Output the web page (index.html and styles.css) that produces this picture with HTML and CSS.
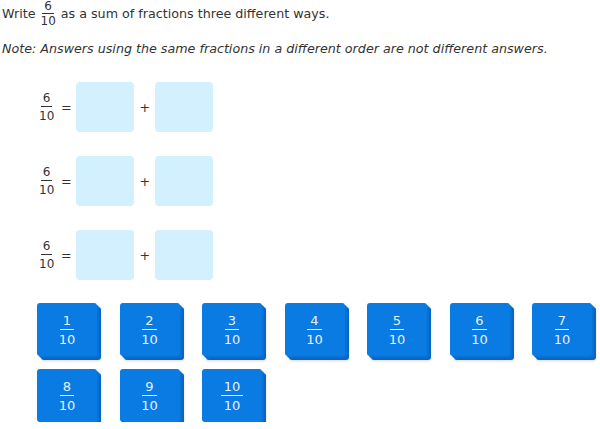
FILE: index.html
```html
<!DOCTYPE html>
<html lang="en">
<head>
    <meta charset="UTF-8">
    <title>Fractions as sums</title>
    <link rel="stylesheet" href="styles.css">
</head>
<body>
    <div class="question">
        <div class="prompt">
            Write
            <span class="frac"><span class="num">6</span><span class="den">10</span></span>
            as a sum of fractions three different ways.
        </div>
        <div class="note">Note: Answers using the same fractions in a different order are not different answers.</div>

        <div class="equations">
            <div class="equation">
                <span class="frac"><span class="num">6</span><span class="den">10</span></span>
                <span class="sign">=</span>
                <div class="slot"></div>
                <span class="sign plus">+</span>
                <div class="slot"></div>
            </div>
            <div class="equation">
                <span class="frac"><span class="num">6</span><span class="den">10</span></span>
                <span class="sign">=</span>
                <div class="slot"></div>
                <span class="sign plus">+</span>
                <div class="slot"></div>
            </div>
            <div class="equation">
                <span class="frac"><span class="num">6</span><span class="den">10</span></span>
                <span class="sign">=</span>
                <div class="slot"></div>
                <span class="sign plus">+</span>
                <div class="slot"></div>
            </div>
        </div>

        <div class="tiles">
            <div class="tile"><span class="frac"><span class="num">1</span><span class="den">10</span></span></div>
            <div class="tile"><span class="frac"><span class="num">2</span><span class="den">10</span></span></div>
            <div class="tile"><span class="frac"><span class="num">3</span><span class="den">10</span></span></div>
            <div class="tile"><span class="frac"><span class="num">4</span><span class="den">10</span></span></div>
            <div class="tile"><span class="frac"><span class="num">5</span><span class="den">10</span></span></div>
            <div class="tile"><span class="frac"><span class="num">6</span><span class="den">10</span></span></div>
            <div class="tile"><span class="frac"><span class="num">7</span><span class="den">10</span></span></div>
            <div class="tile"><span class="frac"><span class="num">8</span><span class="den">10</span></span></div>
            <div class="tile"><span class="frac"><span class="num">9</span><span class="den">10</span></span></div>
            <div class="tile"><span class="frac"><span class="num">10</span><span class="den">10</span></span></div>
        </div>
    </div>
</body>
</html>
```

FILE: styles.css
```css
* {
    box-sizing: border-box;
}

body {
    margin: 0;
    background-color: white;
    font-family: Verdana, 'DejaVu Sans', sans-serif;
    font-size: 12.7px;
    color: #333;
}

.question {
    padding: 0 0 0 2px;
}

/* stacked fraction */
.frac {
    display: inline-flex;
    flex-direction: column;
    align-items: center;
    vertical-align: middle;
    font-size: 12px;
    line-height: 12px;
}

.frac .num {
    padding: 0 2px 2px;
    border-bottom: 1px solid currentColor;
}

.frac .den {
    padding: 3px 2px 0;
}

.prompt {
    display: flex;
    align-items: center;
    gap: 3px;
    height: 27px;
}

.prompt .frac {
    line-height: 11px;
}

.prompt .num {
    padding-bottom: 1px;
}

.prompt .den {
    padding-top: 2px;
}

.note {
    font-style: italic;
    margin-top: 14px;
    line-height: 16px;
}

.equations {
    display: flex;
    flex-direction: column;
    gap: 24px;
    margin: 25px 0 0 35px;
}

.equation {
    display: flex;
    align-items: center;
}

.equation .sign {
    width: 20px;
    text-align: center;
}

.equation .plus {
    width: 21px;
}

.slot {
    width: 58px;
    height: 50px;
    background-color: #d2f0fd;
    border-radius: 4px;
}

.tiles {
    display: grid;
    grid-template-columns: repeat(7, 60px);
    column-gap: 22.5px;
    row-gap: 13px;
    margin: 23px 0 0 35px;
}

.tile {
    height: 53px;
    display: flex;
    align-items: center;
    justify-content: center;
    background-color: #0a7be2;
    color: #e6f1ff;
    border-radius: 3px;
    box-shadow: 2px 2px 0 #0870d4, 4px 4px 0 #0866c2, 4px 5px 3px rgba(0, 0, 0, 0.15);
}

.tile .frac {
    font-size: 13px;
    line-height: 13px;
}

.tile .num {
    padding: 0 3px 2px;
}
```
